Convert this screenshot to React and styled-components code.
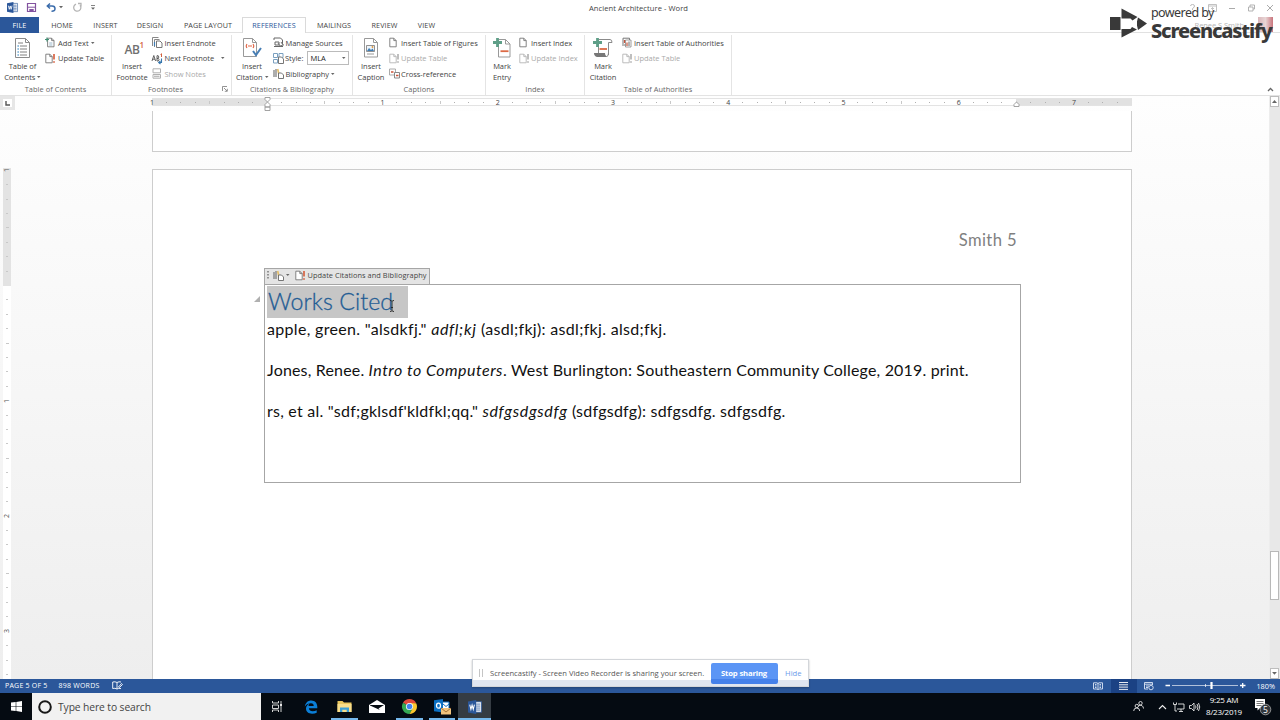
import React from "react";
import styled, { createGlobalStyle, css } from "styled-components";

const Global = createGlobalStyle`
  * { box-sizing: border-box; }
  body { margin: 0; overflow: hidden; background: #fff; }
  svg { display: block; flex: none; overflow: visible; }
`;
const ui = css`font-family: "Open Sans", "Noto Sans", sans-serif;`;

const Screen = styled.div`
  ${ui}
  position: relative;
  width: 1280px;
  height: 720px;
  display: flex;
  flex-direction: column;
  overflow: hidden;
  font-size: 7.5px;
  letter-spacing: -0.05px;
  color: #444;
  background: #fff;
  white-space: nowrap;
`;

/* ---------- title bar ---------- */
const TitleBar = styled.header`
  height: 17px;
  flex: none;
  display: grid;
  grid-template-columns: 110px 1fr 110px;
  align-items: center;
`;
const QuickAccess = styled.div`
  display: flex;
  align-items: center;
  padding: 0 0 2px 7px;
`;
const Gap = styled.i`flex: none; width: ${(p) => p.$w}px;`;
const WindowTitle = styled.div`
  padding: 0 3px 2px 0;
  text-align: center;
  font-size: 7.6px;
  letter-spacing: 0.05px;
  color: #444;
`;
const WindowButtons = styled.div`
  display: flex;
  justify-content: flex-end;
  gap: 12.5px;
  padding: 0 7px 2px 0;
`;

/* ---------- tabs ---------- */
const Tabs = styled.nav`
  height: 16px;
  flex: none;
  display: flex;
  align-items: stretch;
  border-bottom: 1px solid #e1e1e1;
`;
const Tab = styled.div`
  width: ${(p) => p.$w}px;
  height: ${(p) => (p.$file || p.$active ? 16 : 15)}px;
  display: flex;
  align-items: center;
  justify-content: center;
  padding-bottom: ${(p) => (p.$active ? 1 : 0)}px;
  font-size: 7.2px;
  letter-spacing: 0.1px;
  color: ${(p) => (p.$file ? "#fff" : p.$active ? "#2b579a" : "#444")};
  background: ${(p) => (p.$file ? "#2b579a" : "#fff")};
  border: ${(p) => (p.$active ? "1px solid #dadada" : "0")};
  border-bottom: 0;
`;
const Account = styled.div`
  margin-left: auto;
  display: flex;
  align-items: center;
  gap: 14px;
  padding-right: 7px;
  color: #b5b5b5;
`;
const Avatar = styled.span`
  width: 15px;
  height: 15px;
  background: linear-gradient(90deg, #d9b6ba, #e8d5d5 50%, #c9747c);
`;

/* ---------- ribbon ---------- */
const Ribbon = styled.section`
  height: 63px;
  flex: none;
  display: flex;
  padding-top: 2px;
  border-bottom: 1px solid #e3e3e3;
`;
const Group = styled.div`
  width: ${(p) => p.$w}px;
  height: 60px;
  display: flex;
  flex-direction: column;
  border-right: 1px solid #e4e4e4;
`;
const GroupBody = styled.div`
  display: flex;
  height: 49px;
`;
const GroupLabel = styled.div`
  display: flex;
  align-items: center;
  justify-content: center;
  height: 12px;
  font-size: 7.4px;
  letter-spacing: 0.06px;
  color: #666;
`;
const Launcher = styled.span`
  margin-left: auto;
  padding-right: 3px;
`;
const BigButton = styled.div`
  width: ${(p) => p.$w}px;
  margin-left: ${(p) => p.$ml ?? 0}px;
  display: flex;
  flex-direction: column;
  align-items: center;
  line-height: 10.5px;
  text-align: center;
`;
const BigIcon = styled.div`
  height: 26px;
  display: flex;
  align-items: center;
  justify-content: center;
`;
const Caption = styled.div`
  display: flex;
  align-items: center;
  gap: 2px;
`;
const Stack = styled.div`
  margin-left: ${(p) => p.$ml ?? 0}px;
  display: flex;
  flex-direction: column;
`;
const Command = styled.div`
  height: 15.5px;
  display: flex;
  align-items: center;
  letter-spacing: ${(p) => p.$ls ?? -0.03}px;
  color: ${(p) => (p.$off ? "#aaa" : "#444")};
`;
const CommandIcon = styled.span`
  width: ${(p) => p.$w ?? 12}px;
  flex: none;
`;
const StyleBox = styled.div`
  width: 42px;
  height: 14px;
  margin-left: 4px;
  display: flex;
  align-items: center;
  justify-content: space-between;
  padding: 0 3px 0 2px;
  border: 1px solid #bbb;
  color: #222;
`;
const CollapseSlot = styled.div`
  margin-left: auto;
  display: flex;
  align-items: flex-end;
  padding: 0 6px 3px 0;
`;

/* ---------- workspace ---------- */
const Workspace = styled.main`
  height: 583px;
  flex: none;
  display: grid;
  grid-template-columns: 152px 980px 137px 11px;
  background: linear-gradient(#fefefe, #f7f7f7 45%, #eeeeee);
`;
const LeftRail = styled.div`
  display: flex;
  flex-direction: column;
`;
const TabSelector = styled.div`
  width: 15px;
  height: 14px;
  display: flex;
  align-items: center;
  justify-content: center;
  border: 3px solid #e6e6e6;
  background: #fff;
`;
const VRuler = styled.div`
  width: 8px;
  height: 511px;
  margin: 58px 0 0 3px;
  overflow: hidden;
  background: linear-gradient(#e3e3e3 118px, #fff 118px);
`;
const VTick = styled.div`
  height: 14.41px;
  display: flex;
  align-items: center;
  justify-content: center;
  font-size: 7px;
  line-height: 8px;
  color: #555;
  &:first-child { margin-top: -5px; }
`;
const VNumber = styled.span`transform: rotate(-90deg);`;
const VDot = styled.i`
  width: ${(p) => (p.$half ? 3 : 2)}px;
  height: 1px;
  background: #c8c8c8;
`;
const Canvas = styled.div`
  display: flex;
  flex-direction: column;
  min-width: 0;
`;
const HRuler = styled.div`
  position: relative;
  height: 8px;
  margin-top: 2px;
  display: flex;
  flex: none;
  background: linear-gradient(90deg, #e1e1e1 115px, #fff 115px, #fff 864px, #e1e1e1 864px);
  box-shadow: inset 0 1px #e3e3e3, inset 0 -1px #e3e3e3;
`;
const HTick = styled.div`
  flex: none;
  width: 14.41px;
  display: flex;
  align-items: center;
  justify-content: center;
  font-size: 7px;
  color: #444;
  &:first-child { margin-left: -7.2px; }
`;
const HDot = styled.i`
  width: 1px;
  height: ${(p) => (p.$half ? 3 : 1)}px;
  background: ${(p) => (p.$half ? "#c8c8c8" : "#b0b0b0")};
`;
const Indent = styled.span`
  position: absolute;
  left: ${(p) => p.$x}px;
  top: ${(p) => p.$y}px;
`;
const PreviousPage = styled.div`
  height: 41px;
  flex: none;
  margin-top: 5px;
  background: #fff;
  border: 1px solid #cdcdcd;
  border-top: 0;
`;
const Page = styled.article`
  flex: 1;
  margin-top: 17px;
  padding: 58px 110px 0 111px;
  background: #fff;
  border: 1px solid #cdcdcd;
  border-bottom: 0;
  font-family: Lato, sans-serif;
  color: #111;
  letter-spacing: 0;
`;
const RunningHead = styled.div`
  height: 40px;
  padding-right: 4px;
  text-align: right;
  font-size: 16.6px;
  line-height: 24.5px;
  letter-spacing: 0.4px;
  color: #7f7f7f;
`;
const FieldTab = styled.div`
  ${ui}
  width: 166px;
  height: 17px;
  display: flex;
  align-items: center;
  padding: 0 0 2px 2px;
  font-size: 7.4px;
  line-height: 9px;
  letter-spacing: 0.04px;
  color: #444;
  background: #e4e4e4;
  border: 1px solid #a6a6a6;
`;
const FieldLabel = styled.span`padding-bottom: 1px;`;
const FieldBox = styled.div`
  position: relative;
  width: 757px;
  height: 199px;
  margin-top: -1px;
  padding: 1px 2px;
  border: 1px solid #a6a6a6;
`;
const Heading = styled.h1`
  width: 141px;
  height: 32px;
  margin: 0;
  padding-left: 1px;
  font-size: 23.2px;
  line-height: 30px;
  font-weight: 300;
  letter-spacing: 0.08px;
  -webkit-text-stroke: 0.3px #1f5c94;
  color: #1f5c94;
  background: #c6c6c6;
`;
const Entry = styled.p`
  margin: 0 0 16.8px;
  font-size: 16px;
  line-height: 24px;
  letter-spacing: ${(p) => p.$ls ?? 0}px;
  &:first-of-type { margin-top: -1px; }
  em { letter-spacing: ${(p) => p.$em}px; }
`;
const CollapseMark = styled.span`
  position: absolute;
  left: -11px;
  top: 11px;
`;
const Cursor = styled.span`
  position: absolute;
  left: 124px;
  top: 15px;
`;
const Scrollbar = styled.div`
  display: flex;
  flex-direction: column;
  background: #e8e8e8;
  border-left: 1px solid #ededed;
  padding-right: 1px;
`;
const ScrollButton = styled.div`
  height: 11px;
  display: flex;
  align-items: center;
  justify-content: center;
  background: #fff;
  border: 1px solid #bdbdbd;
`;
const Thumb = styled.div`
  height: 49px;
  margin: 444px 0 auto;
  background: #fff;
  border: 1px solid #b8b8b8;
`;

/* ---------- status bar ---------- */
const StatusBar = styled.footer`
  height: 14px;
  flex: none;
  display: flex;
  align-items: center;
  padding: 0 5px 1px;
  font-size: 7px;
  letter-spacing: 0.22px;
  color: #fff;
  background: #2b579a;
`;
const ViewTools = styled.div`
  margin-left: auto;
  display: flex;
  align-items: center;
  height: 14px;
`;
const ViewButton = styled.span`
  width: 25.5px;
  height: 14px;
  display: flex;
  align-items: center;
  justify-content: center;
  background: ${(p) => (p.$on ? "#1b4284" : "transparent")};
`;
const Zoom = styled.span`
  width: 21px;
  text-align: right;
  font-size: 7.3px;
  letter-spacing: 0;
`;

/* ---------- taskbar ---------- */
const Taskbar = styled.footer`
  height: 27px;
  flex: none;
  display: flex;
  color: #fff;
  background: #050b12;
`;
const Start = styled.div`
  width: 32px;
  display: flex;
  align-items: center;
  justify-content: center;
`;
const Search = styled.div`
  width: 229px;
  display: flex;
  align-items: center;
  gap: 6px;
  padding-left: 6px;
  font-size: 10.3px;
  letter-spacing: -0.1px;
  color: #444;
  background: #f1f1f1;
`;
const TaskApp = styled.div`
  width: ${(p) => p.$w ?? 32.6}px;
  display: flex;
  align-items: center;
  justify-content: center;
  background: ${(p) => (p.$active ? "#353c43" : "transparent")};
  box-shadow: ${(p) => (p.$open ? "inset 0 -2px #76b9ed" : "none")};
  border: 0 solid transparent;
  border-width: ${(p) => (p.$open && !p.$active ? "0 3px" : "0")};
`;
const Tray = styled.div`
  margin-left: auto;
  display: flex;
  align-items: center;
  padding-right: 8px;
`;
const Clock = styled.div`
  width: 42px;
  padding-bottom: 1px;
  text-align: center;
  font-size: 8px;
  line-height: 12px;
  letter-spacing: -0.22px;
`;

/* ---------- overlays ---------- */
const ShareBar = styled.aside`
  position: absolute;
  left: 472px;
  top: 659px;
  width: 337px;
  height: 28px;
  display: flex;
  align-items: center;
  padding-left: 6px;
  font-size: 7.6px;
  color: #555;
  background: linear-gradient(#ffffff 20px, #dfe5f0 20px);
  border: 1px solid #d3d6da;
  box-shadow: 0 1px 2px rgba(0, 0, 0, 0.25);
`;
const Grip = styled.span`
  width: 4px;
  height: 8px;
  margin-right: 7px;
  border: solid #c5c5c5;
  border-width: 0 1px;
`;
const ShareText = styled.span`width: 221px; letter-spacing: -0.005px;`;
const StopButton = styled.button`
  ${ui}
  width: 67px;
  height: 21px;
  padding: 0 1px 0 0;
  border: 0;
  border-radius: 2px;
  font-size: 7.7px;
  font-weight: 700;
  letter-spacing: -0.17px;
  color: #fff;
  background: linear-gradient(#5b95f5 16px, #4480ea 16px);
`;
const Hide = styled.span`
  margin-left: 7px;
  letter-spacing: 0.05px;
  color: #6b9bea;
`;
const Watermark = styled.div`
  position: absolute;
  left: 1110px;
  top: 4px;
  display: flex;
  gap: 4px;
  color: #393939;
  font-family: "Noto Sans", sans-serif;
`;
const Brand = styled.div`
  display: flex;
  flex-direction: column;
`;
const Powered = styled.span`
  height: 15px;
  font-size: 12.5px;
  line-height: 18px;
  letter-spacing: -0.57px;
`;
const BrandName = styled.span`
  font-size: 20px;
  line-height: 23px;
  font-weight: 800;
  letter-spacing: -1.18px;
`;

/* ---------- drawings ---------- */
const Caret = ({ c = "#666", s = 4 }) => (
  <svg width={s} height={s / 2 + 0.5} viewBox="0 0 4 2.5"><path d="M0 0h4L2 2.3z" fill={c} /></svg>
);
const SmallDoc = ({ off, bang, plus }) => (
  <svg width="10" height="11" viewBox="0 0 10 11" fill="none">
    <path d="M.8 1.2h4l2.4 2.4v6.2H.8zM4.8 1.2v2.4h2.4" transform={plus ? "translate(1.8 0)" : undefined} fill="#fff" stroke={off ? "#b5b5b5" : "#777"} strokeWidth=".9" />
    {plus && <path d="M0 2.5h4M2 .5v4" stroke="#3f8f73" strokeWidth="1.2" />}
    {plus && <path d="M4.2 6h3.2M4.2 8h3.2" stroke="#6e99b5" strokeWidth=".7" />}
    {bang && <path d="M9 1v5.6M9 8.2v1.6" stroke={off ? "#aaa" : "#d4502c"} strokeWidth="1.5" />}
  </svg>
);
const TocIcon = () => (
  <svg width="15" height="20" viewBox="0 0 15 20" fill="none">
    <path d="M.5.5h10l4 4v15H.5zM10.5.5v4h4" fill="#fff" stroke="#8b8b8b" />
    <path d="M3 5h5M5 8h7M5 11h7M5 14h7M5 17h7" stroke="#808080" />
    <path d="M2.4 8H4M2.4 11H4M2.4 14H4M2.4 17H4" stroke="#3183bd" />
  </svg>
);
const CitationIcon = () => (
  <svg width="19" height="20" viewBox="0 0 19 20" fill="none">
    <path d="M.5.5h9l4 4v14H.5zM9.5.5v4h4" fill="#fff" stroke="#999" />
    <path d="M4 6Q2.400 8 4 10M10 6q1.600 2 0 4M5 8h4" stroke="#e06545" strokeWidth="1.1" />
    <path d="M10 13l3 4 5-7" stroke="#477eb5" strokeWidth="2" />
  </svg>
);
const CaptionIcon = () => (
  <svg width="14" height="20" viewBox="0 0 14 20" fill="none">
    <path d="M.5.5h9l4 4v14.500H.5zM9.500.5v4h4" fill="#fff" stroke="#999" />
    <path d="M2.500 7.500h8v6h-8z" stroke="#777" strokeWidth=".8" fill="#eef4f9" />
    <path d="M3 13l2-3 2 2 1.500-1.500L10 13z" fill="#3d7db5" /><circle cx="8.500" cy="9" r=".9" fill="#e29a3d" />
    <path d="M3 16h7" stroke="#999" />
  </svg>
);
const MarkEntryIcon = () => (
  <svg width="19" height="20" viewBox="0 0 19 20" fill="none">
    <path d="M5.500 1.500h7l4.500 4.500v13H5.500zM12.500 1.500v4.500h4.500" fill="#fff" stroke="#999" />
    <path d="M0 4.500h9M4.500 0v9" stroke="#5f9f88" strokeWidth="2.800" />
    <path d="M7.500 13.200h8" stroke="#dc6a45" strokeWidth="1.800" />
  </svg>
);
const MarkCitationIcon = () => (
  <svg width="20" height="20" viewBox="0 0 20 20" fill="none">
    <path d="M5.500 15V1.500h11.500q2 0 2 3h-3.500V17" fill="#fff" stroke="#8a8a8a" />
    <path d="M1 15h11q0 3 3 4H4q-3-1-3-4z" fill="#777" />
    <path d="M15.500 15q0 3.500-2 3.500" stroke="#888" />
    <path d="M0 4.500h9M4.500 0v9" stroke="#5f9f88" strokeWidth="2.800" />
    <path d="M6.500 11h7.500" stroke="#dc6a45" strokeWidth="1.800" />
  </svg>
);
const FootnoteGlyph = styled.div`
  display: flex;
  align-items: flex-start;
  padding: 3px 0 0 4px;
  font-size: 12px;
  line-height: 16px;
  font-weight: 600;
  letter-spacing: -0.5px;
  color: #707070;
`;
const Sup = styled.span`
  font-size: 8px;
  line-height: 5px;
  color: #d3603d;
`;
const EndnoteIcon = () => (
  <svg width="11" height="11" viewBox="0 0 11 11" fill="none">
    <path d="M.5 9V.5h6" stroke="#888" /><path d="M2.500 10V2.500h5" stroke="#888" />
    <path d="M4.500 4h3.500l2 2v4.500h-5.500z" fill="#fff" stroke="#777" /><path d="M2.500 5v4" stroke="#3d7db5" strokeWidth="1.200" />
  </svg>
);
const NextIcon = () => (
  <svg width="11" height="11" viewBox="0 0 11 11" fill="none">
    <path d="M0 8l1.800-5.500L3.600 8M.6 6.200h2.400M5 2.700V8h1.300q1.500-1.300 0-2.600H5h1.200q1.300-1.300 0-2.700z" stroke="#555" strokeWidth=".9" />
    <path d="M8.500 1.500l1-.8V4" stroke="#d3603d" /><path d="M7 9.500h2.500V5.500M8.500 8l-1.800 1.500L8.500 11" stroke="#3576ad" strokeWidth="1.100" />
  </svg>
);
const NotesIcon = () => (
  <svg width="10" height="11" viewBox="0 0 10 11" fill="none">
    <path d="M1 .8h7.500v4H1zM1 6.500h7.500v3.700H1z" stroke="#b0b0b0" /><path d="M2 8.400h5.500" stroke="#bbb" strokeWidth="1.500" />
  </svg>
);
const SourcesIcon = () => (
  <svg width="12" height="11" viewBox="0 0 12 11" fill="none">
    <path d="M1 3V1h6.500l2 2v4M1 9.500h9M2 5h4v3H2z" stroke="#666" strokeWidth="1" /><path d="M5 6l2 3 4-1.200M8 5l2 3" stroke="#777" />
  </svg>
);
const StyleIcon = () => (
  <svg width="11" height="11" viewBox="0 0 11 11" fill="none">
    <path d="M.5.5h4v4h-4zM6 .5h4v4H6zM.5 6.500h4v3.500h-4z" stroke="#7aa0c0" /><path d="M5.500 4h3l2 2v4.500h-5z" fill="#fff" stroke="#777" />
  </svg>
);
const BiblioIcon = () => (
  <svg width="11" height="11" viewBox="0 0 11 11" fill="none">
    <path d="M1 2v7M3 1v8" stroke="#777" strokeWidth="1.200" /><path d="M4.700 1l1.600 7" stroke="#e4bd66" strokeWidth="1.600" />
    <path d="M5.500 5h3l2 2v3.500h-5z" fill="#fff" stroke="#666" strokeWidth=".9" />
  </svg>
);
const CrossIcon = () => (
  <svg width="12" height="11" viewBox="0 0 12 11" fill="none">
    <path d="M.5 1h6v6h-6z" stroke="#aaa" /><path d="M5.500 4.500h5v5.500h-5z" fill="#fff" stroke="#888" />
    <path d="M2 4h2.500" stroke="#ce5438" strokeWidth="1.500" /><path d="M7 7.500h2.500" stroke="#ce5438" strokeWidth="1.500" />
  </svg>
);
const AuthoritiesIcon = () => (
  <svg width="10" height="11" viewBox="0 0 10 11" fill="none">
    <path d="M1 7V1.200h6.500V3M0 8h4" stroke="#777" /><path d="M3.500 3h5.500v7H3.500z" fill="#fff" stroke="#888" strokeWidth=".8" />
    <path d="M2.500 3v3M5 5.500v3.500" stroke="#c9543b" strokeWidth="1.200" /><path d="M7 4.500V9" stroke="#666" />
  </svg>
);
const WordIcon = ({ s = 12 }) => (
  <svg width={s} height={s} viewBox="0 0 12 12">
    <path d="M6 1.500h5.500v9H6z" fill="#fff" stroke="#2b579a" strokeWidth=".7" />
    <path d="M7 3.500h3.500M7 5.200h3.500M7 6.900h3.500M7 8.600h3.500" stroke="#2b579a" strokeWidth=".7" />
    <path d="M0 1.300L7 0v12L0 10.700z" fill="#2b579a" />
    <path d="M1.500 4l1 4 1-3.700 1 3.700 1-4" fill="none" stroke="#fff" strokeWidth=".9" />
  </svg>
);
const PeakIndent = () => (
  <svg width="7" height="15" viewBox="0 0 7 15" fill="#fff" stroke="#999" strokeWidth=".9">
    <path d="M1 .5h5v2L3.500 5 1 2.500zM1 10V7.500L3.500 5 6 7.500V10zM1 10h5v3.500H1z" />
  </svg>
);

const Big = ({ icon, top, bottom, drop, w, ml }) => (
  <BigButton $w={w} $ml={ml}>
    <BigIcon>{icon}</BigIcon>
    <Caption>{top}</Caption>
    <Caption>{bottom}{drop && <Caret s={3.5} />}</Caption>
  </BigButton>
);
const Cmd = ({ icon, iw, children, off, ls }) => (
  <Command $off={off} $ls={ls}><CommandIcon $w={iw}>{icon}</CommandIcon>{children}</Command>
);

const tabs = [
  ["HOME", 46], ["INSERT", 41], ["DESIGN", 48], ["PAGE LAYOUT", 68],
  ["REFERENCES", 64, true], ["MAILINGS", 56], ["REVIEW", 45], ["VIEW", 39],
];

function RibbonArea() {
  return (
    <Ribbon>
      <Group $w={112}>
        <GroupBody>
          <Big w={43} ml={1} icon={<TocIcon />} top="Table of" bottom="Contents" drop />
          <Stack $ml={1}>
            <Cmd iw={13} icon={<SmallDoc plus />}>Add Text<Gap $w={2} /><Caret s={3.5} /></Cmd>
            <Cmd iw={13} icon={<SmallDoc bang />}>Update Table</Cmd>
          </Stack>
        </GroupBody>
        <GroupLabel>Table of Contents</GroupLabel>
      </Group>
      <Group $w={120}>
        <GroupBody>
          <Big w={38} ml={1} icon={<FootnoteGlyph>AB<Sup>1</Sup></FootnoteGlyph>} top="Insert" bottom="Footnote" />
          <Stack $ml={1}>
            <Cmd iw={12.5} icon={<EndnoteIcon />}>Insert Endnote</Cmd>
            <Cmd iw={12.5} icon={<NextIcon />}>Next Footnote<Gap $w={7} /><Caret s={3.5} /></Cmd>
            <Cmd iw={12.5} off icon={<NotesIcon />}>Show Notes</Cmd>
          </Stack>
        </GroupBody>
        <GroupLabel>
          <Gap $w={36} />Footnotes
          <Launcher>
            <svg width="6" height="6" viewBox="0 0 6 6" fill="none" stroke="#777" strokeWidth=".8"><path d="M.5 5V.5H5M2 2l3 3M5.300 2.800v2.500H2.800" /></svg>
          </Launcher>
        </GroupLabel>
      </Group>
      <Group $w={121}>
        <GroupBody>
          <Big w={38} ml={1} icon={<CitationIcon />} top="Insert" bottom="Citation" drop />
          <Stack $ml={2}>
            <Cmd iw={12.5} icon={<SourcesIcon />}>Manage Sources</Cmd>
            <Cmd iw={12} icon={<StyleIcon />}>Style:<StyleBox>MLA<Caret s={3.5} /></StyleBox></Cmd>
            <Cmd iw={12.5} icon={<BiblioIcon />}>Bibliography<Gap $w={2} /><Caret s={3.5} /></Cmd>
          </Stack>
        </GroupBody>
        <GroupLabel>Citations &amp; Bibliography</GroupLabel>
      </Group>
      <Group $w={133}>
        <GroupBody>
          <Big w={34} ml={1} icon={<CaptionIcon />} top="Insert" bottom="Caption" />
          <Stack $ml={1}>
            <Cmd iw={12} icon={<SmallDoc />}>Insert Table of Figures</Cmd>
            <Cmd iw={12} off icon={<SmallDoc off bang />}>Update Table</Cmd>
            <Cmd iw={12} icon={<CrossIcon />}>Cross-reference</Cmd>
          </Stack>
        </GroupBody>
        <GroupLabel>Captions</GroupLabel>
      </Group>
      <Group $w={99}>
        <GroupBody>
          <Big w={30} ml={1} icon={<MarkEntryIcon />} top="Mark" bottom="Entry" />
          <Stack $ml={2}>
            <Cmd iw={12} icon={<SmallDoc />}>Insert Index</Cmd>
            <Cmd iw={12} off icon={<SmallDoc off bang />}>Update Index</Cmd>
          </Stack>
        </GroupBody>
        <GroupLabel>Index</GroupLabel>
      </Group>
      <Group $w={147}>
        <GroupBody>
          <Big w={34} ml={1} icon={<MarkCitationIcon />} top="Mark" bottom="Citation" />
          <Stack $ml={2}>
            <Cmd iw={12} icon={<AuthoritiesIcon />}>Insert Table of Authorities</Cmd>
            <Cmd iw={12} off icon={<SmallDoc off bang />}>Update Table</Cmd>
          </Stack>
        </GroupBody>
        <GroupLabel>Table of Authorities</GroupLabel>
      </Group>
      <CollapseSlot>
        <svg width="7" height="5" viewBox="0 0 7 5" fill="none" stroke="#666" strokeWidth="1.300"><path d="M1 4l2.500-2.500L6 4" /></svg>
      </CollapseSlot>
    </Ribbon>
  );
}

const ticks = (n) => Array.from({ length: n }, (_, i) => i);
const inch = (i) => (i === 0 ? "1" : i === 8 ? "" : i % 8 === 0 ? String(i / 8 - 1) : null);

function DocumentArea() {
  return (
    <Workspace>
      <LeftRail>
        <TabSelector><svg width="5" height="5" viewBox="0 0 5 5" fill="none" stroke="#555" strokeWidth="1.400"><path d="M1 0v4h4" /></svg></TabSelector>
        <VRuler>
          {ticks(36).map((i) => (
            <VTick key={i}>{inch(i) !== null ? <VNumber>{inch(i)}</VNumber> : <VDot $half={i % 4 === 0} />}</VTick>
          ))}
        </VRuler>
      </LeftRail>
      <Canvas>
        <HRuler>
          {ticks(68).map((i) => (
            <HTick key={i}>{inch(i) !== null ? inch(i) : <HDot $half={i % 4 === 0} />}</HTick>
          ))}
          <Indent $x={111.5} $y={-1}><PeakIndent /></Indent>
          <Indent $x={860.5} $y={3}>
            <svg width="7" height="6" viewBox="0 0 7 6" fill="#fff" stroke="#999" strokeWidth=".9"><path d="M1 5.500V3.500L3.500 1 6 3.500v2z" /></svg>
          </Indent>
        </HRuler>
        <PreviousPage />
        <Page>
          <RunningHead>Smith 5</RunningHead>
          <FieldTab>
            <svg width="3" height="9" viewBox="0 0 3 9" stroke="#777" strokeWidth="1.500" strokeDasharray="1.500 1.500"><path d="M1 0v9" /></svg>
            <Gap $w={3} /><BiblioIcon /><Gap $w={2} /><Caret s={3.5} /><Gap $w={5} /><SmallDoc bang /><Gap $w={3} />
            <FieldLabel>Update Citations and Bibliography</FieldLabel>
          </FieldTab>
          <FieldBox>
            <CollapseMark><svg width="6" height="6" viewBox="0 0 6 6"><path d="M6 0v6H0z" fill="#b0b0b0" /></svg></CollapseMark>
            <Heading>Works Cited</Heading>
            <Entry $ls={0.31} $em={0.65}>apple, green. "alsdkfj." <em>adfl;kj</em> (asdl;fkj): asdl;fkj. alsd;fkj.</Entry>
            <Entry $ls={0.17} $em={0.5}>Jones, Renee. <em>Intro to Computers</em>. West Burlington: Southeastern Community College, 2019. print.</Entry>
            <Entry $ls={0.23} $em={0.65}>rs, et al. "sdf;gklsdf'kldfkl;qq." <em>sdfgsdgsdfg</em> (sdfgsdfg): sdfgsdfg. sdfgsdfg.</Entry>
            <Cursor>
              <svg width="6" height="12" viewBox="0 0 6 12" fill="none" stroke="#222" strokeWidth=".9"><path d="M1 .5q2 0 2 1 0-1 2-1M3 1.500v9M1 11.500q2 0 2-1 0 1 2 1M2 7.500h2" /></svg>
            </Cursor>
          </FieldBox>
        </Page>
      </Canvas>
      <div />
      <Scrollbar>
        <ScrollButton><svg width="5" height="3" viewBox="0 0 5 3"><path d="M0 3h5L2.500 0z" fill="#666" /></svg></ScrollButton>
        <Thumb />
        <ScrollButton><Caret s={5} c="#666" /></ScrollButton>
      </Scrollbar>
    </Workspace>
  );
}

function Status() {
  return (
    <StatusBar>
      PAGE 5 OF 5<Gap $w={11} />898 WORDS<Gap $w={12} />
      <svg width="11" height="9" viewBox="0 0 11 9" fill="none" stroke="#fff" strokeWidth=".9"><path d="M5 1.500Q3 .3.700 1v6.500q2.300-.7 4.300.5zM5 1.500Q7 .3 9 1M5 8q1.500-1 4-.5M6.500 6l3-3.500 1 1L7.500 6.500z" /></svg>
      <ViewTools>
        <ViewButton><svg width="10" height="8" viewBox="0 0 10 8" fill="none" stroke="#dbe5f5" strokeWidth=".9"><path d="M5 1v6.500M.5.8H4l1 .7L6 .8h3.500V7H6l-1 .6L4 7H.5zM2 2.500h1.500M2 4h1.500M2 5.500h1.500M6.500 2.500H8M6.500 4H8M6.500 5.500H8" /></svg></ViewButton>
        <ViewButton $on><svg width="9" height="8" viewBox="0 0 9 8" fill="none" stroke="#fff" strokeWidth=".9"><path d="M0 .5h9M0 2.800h9M0 5.100h9M0 7.400h9" /></svg></ViewButton>
        <ViewButton><svg width="10" height="8" viewBox="0 0 10 8" fill="none" stroke="#dbe5f5" strokeWidth=".9"><path d="M4 7H.5V.5h8V3M.5 2.200h8M2 4h3M2 5.500h2" /><circle cx="7" cy="5.600" r="2.200" /></svg></ViewButton>
        <Gap $w={3} />
        <svg width="80" height="9" viewBox="0 0 80 9" fill="none" stroke="#fff">
          <path d="M.5 4.500H5M75 4.500h5.500M77.700 2v5" strokeWidth="1.300" /><path d="M7 4.500h66" strokeWidth=".8" opacity=".8" /><path d="M46.500 1v7" strokeWidth="2.200" /><path d="M40.500 3v3" strokeWidth=".7" />
        </svg>
        <Gap $w={9} />
        <Zoom>180%</Zoom>
      </ViewTools>
    </StatusBar>
  );
}

function Tasks() {
  return (
    <Taskbar>
      <Start><svg width="11" height="11" viewBox="0 0 11 11" fill="#fff"><path d="M0 1.600L4.700 1v4.200H0zM5.300.9L11 0v5.200H5.300zM0 5.800h4.700V10L0 9.400zM5.300 5.800H11V11l-5.700-.9z" /></svg></Start>
      <Search>
        <svg width="14" height="14" viewBox="0 0 14 14"><circle cx="7" cy="7" r="5.800" fill="none" stroke="#171717" strokeWidth="2" /></svg>
        Type here to search
      </Search>
      <TaskApp $w={33}><svg width="11" height="11" viewBox="0 0 11 11" fill="none" stroke="#e6e6e6" strokeWidth=".9"><path d="M.5 0v2h6V0M.5 4h6v3.500h-6zM.5 11V9h6v2M9 0v11" /><path d="M9 3v2" strokeWidth="2" /></svg></TaskApp>
      <TaskApp $w={34}>
        <svg width="14" height="14" viewBox="0 0 14 14"><path d="M.8 6.400C1.500 2.500 4 .4 7.300.4c3.800 0 6 2.900 6 6.300v1.600H4.900c.1 2 1.700 3 3.800 3 1.500 0 2.800-.4 4-1.100v2.600c-1.300.7-2.900 1-4.600 1-3.700 0-6.100-2-6.100-5.200 0-2.400 1.400-4 3.400-4.900-.5.600-.8 1.400-.9 2.300h5.200c0-1.700-.8-2.700-2.700-2.700-2.300 0-4.700 1.200-6.200 3.100z" fill="#0b7fd8" /></svg>
      </TaskApp>
      <TaskApp $open><svg width="15" height="13" viewBox="0 0 15 13"><path d="M.5 1h5l1.500 1.500h7.500V12H.5z" fill="#e9c75f" /><path d="M.5 4h14v8H.5z" fill="#f8de8c" /><path d="M3 12V7.500h9V12h-2.300V9.800H5.300V12z" fill="#3ba0d8" /></svg></TaskApp>
      <TaskApp><svg width="16" height="13" viewBox="0 0 16 13"><path d="M0 5L8 0l8 5v8H0z" fill="#fff" /><path d="M1 5h14l-5.500 3.500L11 10 1 5.500z" fill="#050b12" /></svg></TaskApp>
      <TaskApp $open>
        <svg width="15" height="15" viewBox="0 0 16 16"><path d="M8 8L1.070 4A8 8 0 0 1 14.930 4z" fill="#e24a3b" /><path d="M8 8h0L1.070 4A8 8 0 0 0 8 16l3.500-6z" fill="#35a853" /><path d="M8 4.400h7.150A8 8 0 0 1 8 16l3.300-6z" fill="#fbc72d" /><circle cx="8" cy="8" r="3.800" fill="#fff" /><circle cx="8" cy="8" r="3" fill="#4384ee" /></svg>
      </TaskApp>
      <TaskApp $open>
        <svg width="17" height="16" viewBox="0 0 17 16"><path d="M8 3h7v7H8z" fill="#fff" stroke="#0f6fc0" /><path d="M9 5l3 2.500L15 5" fill="none" stroke="#0f6fc0" /><path d="M0 1.300L9 0v13.500l-9-1.300z" fill="#0b6fc2" /><ellipse cx="4.500" cy="6.700" rx="2" ry="2.500" fill="none" stroke="#fff" strokeWidth="1.300" /><path d="M7 9h10v6.500H7z" fill="#f2c37d" /><path d="M7 9l5 4 5-4" fill="none" stroke="#9b6a33" strokeWidth=".9" /></svg>
      </TaskApp>
      <TaskApp $open $active><WordIcon s={14} /></TaskApp>
      <Tray>
        <svg width="11" height="11" viewBox="0 0 11 11" fill="none" stroke="#e6e6e6" strokeWidth=".9"><circle cx="7.500" cy="2.200" r="1.700" /><circle cx="3.800" cy="5" r="1.700" /><path d="M.7 10q0-3 3-3t3 3M6 4.500q4-1 4.500 3" /></svg>
        <Gap $w={14} />
        <svg width="9" height="6" viewBox="0 0 9 6" fill="none" stroke="#eee" strokeWidth="1.100"><path d="M1 5l3.500-3.500L8 5" /></svg>
        <Gap $w={6} />
        <svg width="12" height="10" viewBox="0 0 12 10" fill="none" stroke="#e6e6e6" strokeWidth=".9"><path d="M5 2h6v5H4M6 9.500h4M8 7v2.500M.5.500v2h3v-2M2 2.500V9h2" /></svg>
        <Gap $w={4} />
        <svg width="11" height="10" viewBox="0 0 11 10" fill="none" stroke="#e6e6e6" strokeWidth=".9"><path d="M.5 3.500h2L5 1v8L2.500 6.500h-2zM6.500 3.500q1 1.500 0 3M8 2q2 3 0 6M9.500 1q2.500 4 0 8" /></svg>
        <Gap $w={3} />
        <Clock>9:25 AM<br />8/23/2019</Clock>
        <Gap $w={9} />
        <svg width="18" height="17" viewBox="0 0 18 17">
          <path d="M1 1h10v9H6l-2.500 2.500V10H1z" fill="#fff" /><path d="M2.500 3.500h7M2.500 5.500h7M2.500 7.500h5" stroke="#555" strokeWidth=".8" />
          <circle cx="11.500" cy="11.500" r="5.300" fill="#33383d" stroke="#aaa" strokeWidth=".8" /><text x="11.500" y="14.500" textAnchor="middle" fontSize="8.500" fill="#fff">5</text>
        </svg>
      </Tray>
    </Taskbar>
  );
}

export default function App() {
  return (
    <Screen>
      <Global />
      <TitleBar>
        <QuickAccess>
          <WordIcon s={11} /><Gap $w={8.5} />
          <svg width="9" height="9" viewBox="0 0 9 9"><path d="M.5.5h8v8h-8z" fill="#fff" stroke="#83539f" strokeWidth="1.200" /><path d="M1 4.200h7" stroke="#83539f" /><path d="M2.300 6h4.400v3H2.300z" fill="#83539f" /></svg>
          <Gap $w={10} />
          <svg width="10" height="9" viewBox="0 0 10 9" fill="none" stroke="#3b6cab" strokeWidth="1.500"><path d="M1.500 3h4.500q3 0 3 2.700T5.500 8.300M4 .5L1.300 3 4 5.500" /></svg>
          <Gap $w={3.5} /><Caret s={4} /><Gap $w={9.5} />
          <svg width="9" height="9" viewBox="0 0 9 9" fill="none" stroke="#b5b5b5" strokeWidth="1.300"><path d="M3 1.200A3.600 3.600 0 1 0 7 2.200M5 .5h3v3" /></svg>
          <Gap $w={9.5} />
          <svg width="4" height="5" viewBox="0 0 4 5"><path d="M0 .5h4" stroke="#666" strokeWidth=".8" /><path d="M0 2.500h4L2 4.800z" fill="#666" /></svg>
        </QuickAccess>
        <WindowTitle>Ancient Architecture - Word</WindowTitle>
        <WindowButtons>
          <svg width="5" height="8" viewBox="0 0 5 8" fill="none" stroke="#bbb"><path d="M.5 2q0-1.500 2-1.500t2 1.500-2 2.500V6M2.500 7v1" /></svg>
          <svg width="9" height="8" viewBox="0 0 9 8" fill="none" stroke="#bbb" strokeWidth=".9"><path d="M.5.5h8v7h-8zM.5 2h8M4.500 6.500v-3M3 5l1.500-1.500L6 5" /></svg>
          <svg width="6" height="8" viewBox="0 0 6 8" fill="none" stroke="#aaa"><path d="M0 4.500h6" /></svg>
          <svg width="7" height="8" viewBox="0 0 7 8" fill="none" stroke="#aaa" strokeWidth=".9"><path d="M.5 3h4.500v4H.5zM2 3V1h4.500v4H5" /></svg>
          <svg width="6" height="8" viewBox="0 0 6 8" fill="none" stroke="#aaa"><path d="M0 1l6 6M6 1L0 7" /></svg>
        </WindowButtons>
      </TitleBar>
      <Tabs>
        <Tab $w={39} $file>FILE</Tab>
        {tabs.map(([t, w, on]) => <Tab key={t} $w={w} $active={on}>{t}</Tab>)}
        <Account>Renee S Smith<Avatar /></Account>
      </Tabs>
      <RibbonArea />
      <DocumentArea />
      <Status />
      <Tasks />
      <ShareBar>
        <Grip />
        <ShareText>Screencastify - Screen Video Recorder is sharing your screen.</ShareText>
        <StopButton>Stop sharing</StopButton>
        <Hide>Hide</Hide>
      </ShareBar>
      <Watermark>
        <svg width="37" height="34" viewBox="0 0 37 34" fill="#393939">
          <path d="M0 13h10.500v13H0zM11.500 4.500l16 8.500-5 3.500-2-2h-9zM11.500 33.500V25h9l1.500-2 5 2.500zM28 13.500l9 6-9 6.500-1-4.500v-4z" />
        </svg>
        <Brand>
          <Powered>powered by</Powered>
          <BrandName>Screencastify</BrandName>
        </Brand>
      </Watermark>
    </Screen>
  );
}
